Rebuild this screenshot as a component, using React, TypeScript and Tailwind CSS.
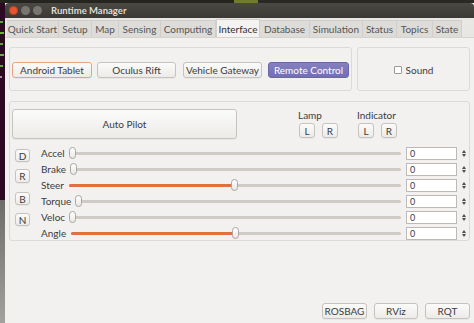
import React from "react";

const tabs: { name: string; w: number; active?: boolean }[] = [
  { name: "Quick Start", w: 52 },
  { name: "Setup", w: 33 },
  { name: "Map", w: 27 },
  { name: "Sensing", w: 42 },
  { name: "Computing", w: 55 },
  { name: "Interface", w: 44, active: true },
  { name: "Database", w: 50 },
  { name: "Simulation", w: 53 },
  { name: "Status", w: 34 },
  { name: "Topics", w: 36 },
  { name: "State", w: 29 },
];

function Btn({
  children,
  className = "",
}: {
  children: React.ReactNode;
  className?: string;
}) {
  return (
    <div
      className={
        "flex items-center justify-center whitespace-nowrap rounded-[3px] border border-[#c6c3be] bg-linear-to-b from-[#fbfbfa] to-[#ecebe8] text-[10px] leading-none text-[#3c3c3c] shadow-[0_1px_0_rgba(0,0,0,0.04)] " +
        className
      }
    >
      {children}
    </div>
  );
}

function Slider({ label, pct }: { label: string; pct: number }) {
  return (
    <div className="flex h-[16px] items-center">
      <div className="whitespace-nowrap text-[10px] leading-none text-[#3c3c3c]">{label}</div>
      <div className="relative ml-[4px] h-[12px] flex-1">
        <div className="absolute left-[1px] right-0 top-[5px] h-[3px] rounded-full bg-[#cfccc7]" />
        {pct > 0 && (
          <div
            className="absolute left-[1px] top-[5px] h-[3px] rounded-full bg-[#e36f3e]"
            style={{ width: `${pct}%` }}
          />
        )}
        <div
          className="absolute top-0 h-[12px] w-[7px] rounded-[4px] border border-[#a9a6a0] bg-linear-to-b from-[#ffffff] to-[#e9e8e5]"
          style={{ left: `calc(${pct}% * 0.98)` }}
        />
      </div>
      <div className="ml-[5px] flex h-[13px] w-[51px] items-center border border-[#bdbab5] bg-white pl-[3px] text-[9px] leading-none text-[#3c3c3c]">
        0
      </div>
      <div className="ml-[3px] flex w-[7px] flex-col items-center gap-[1px]">
        <svg width="4" height="3" viewBox="0 0 4 3">
          <path d="M2 0 L4 3 L0 3 Z" fill="#4a4a4a" />
        </svg>
        <svg width="4" height="3" viewBox="0 0 4 3">
          <path d="M0 0 L4 0 L2 3 Z" fill="#4a4a4a" />
        </svg>
      </div>
    </div>
  );
}

export default function App() {
  return (
    <div className="flex h-[323px] w-[474px] flex-col overflow-hidden bg-[#2b2a26] font-['Lato',sans-serif]">
      {/* desktop top strip */}
      <div className="flex h-[3px] shrink-0">
        <div className="w-[234px] bg-[#26241f]" />
        <div className="w-[24px] bg-[#6f7d2c]" />
        <div className="flex-1 bg-[#2a2925]" />
      </div>
      <div className="flex flex-1">
        {/* desktop left strip */}
        <div className="flex w-[5px] flex-col">
          <div className="flex h-[197px] flex-col gap-[9px] bg-[#2c0a21] pt-[18px]">
            <div className="h-[2px] w-[3px] bg-[#5fa33a]" />
            <div className="h-[2px] w-[4px] bg-[#6bb03f]" />
            <div className="h-[2px] w-[3px] bg-[#5fa33a]" />
            <div className="h-[2px] w-[4px] bg-[#6bb03f]" />
            <div className="h-[2px] w-[3px] bg-[#5fa33a]" />
            <div className="h-[2px] w-[2px] bg-[#a98aa0]" />
          </div>
          <div className="flex-1 bg-linear-to-b from-[#6e6c69] to-[#a3a29f]" />
        </div>
        {/* window */}
        <div className="flex flex-1 flex-col bg-[#f2f1f0]">
          {/* title bar */}
          <div className="flex h-[15px] items-center rounded-t-[4px] bg-linear-to-b from-[#4a4944] to-[#3a3935] pl-[4px]">
            <div className="flex items-center gap-[3px]">
              <div className="h-[9px] w-[9px] rounded-full bg-[#e6542f] shadow-[inset_0_0_0_1px_rgba(0,0,0,0.2)]" />
              <div className="h-[9px] w-[9px] rounded-full bg-[#78766f]" />
              <div className="h-[9px] w-[9px] rounded-full bg-[#78766f]" />
            </div>
            <div className="ml-[9px] whitespace-nowrap text-[9.5px] font-bold leading-none text-[#dfdbd2]">
              Runtime Manager
            </div>
          </div>
          {/* tab bar */}
          <div className="flex h-[19px] items-end bg-[#e9e7e4] pl-[2px]">
            {tabs.map((t) => (
              <div
                key={t.name}
                style={{ width: t.w }}
                className={
                  "flex items-center justify-center whitespace-nowrap border border-b-0 text-[10px] leading-none " +
                  (t.active
                    ? "h-[18px] border-[#d2cfca] bg-[#f4f3f2] text-[#2f2f2f]"
                    : "h-[17px] border-[#d2cfca] border-l-0 bg-[#dedcd8] text-[#555]")
                }
              >
                {t.name}
              </div>
            ))}
          </div>
          {/* content */}
          <div className="flex flex-1 flex-col border-t border-[#d6d3ce] px-[4px] pt-[9px]">
            {/* top group row */}
            <div className="flex h-[44px] gap-[5px]">
              <div className="flex w-[343px] items-center gap-[5px] rounded-[3px] border border-[#dcdad6] pl-[2px] pt-[2px]">
                <Btn className="h-[16px] w-[80px] border-[#e5a384]">Android Tablet</Btn>
                <Btn className="h-[16px] w-[79px]">Oculus Rift</Btn>
                <Btn className="ml-[2px] h-[16px] w-[79px]">Vehicle Gateway</Btn>
                <div className="ml-[1px] flex h-[16px] w-[81px] items-center justify-center whitespace-nowrap rounded-[3px] border border-[#6b66a6] bg-linear-to-b from-[#8580c0] to-[#746fb2] text-[10px] leading-none text-white">
                  Remote Control
                </div>
              </div>
              <div className="flex flex-1 items-center justify-center gap-[4px] rounded-[3px] border border-[#dcdad6] pt-[2px]">
                <div className="h-[8px] w-[8px] rounded-[1px] border border-[#9c9993] bg-white" />
                <div className="text-[10px] leading-none text-[#3c3c3c]">Sound</div>
              </div>
            </div>
            {/* main group */}
            <div className="mt-[10px] flex h-[140px] flex-col rounded-[3px] border border-[#dcdad6] pl-[2px] pr-[2px] pt-[7px]">
              <div className="flex h-[30px]">
                <Btn className="h-[30px] w-[225px] text-[10px]">Auto Pilot</Btn>
                <div className="ml-[61px] flex flex-col">
                  <div className="h-[14px] pt-[1px] text-[10px] leading-[10px] text-[#3c3c3c]">Lamp</div>
                  <div className="flex gap-[7px] pl-[1px]">
                    <Btn className="h-[15px] w-[16px] text-[9px]">L</Btn>
                    <Btn className="h-[15px] w-[16px] text-[9px]">R</Btn>
                  </div>
                </div>
                <div className="ml-[19px] flex flex-col">
                  <div className="h-[14px] pt-[1px] text-[10px] leading-[10px] text-[#3c3c3c]">Indicator</div>
                  <div className="flex gap-[7px] pl-[1px]">
                    <Btn className="h-[15px] w-[16px] text-[9px]">L</Btn>
                    <Btn className="h-[15px] w-[16px] text-[9px]">R</Btn>
                  </div>
                </div>
              </div>
              <div className="mt-[6px] flex">
                <div className="ml-[3px] flex w-[15px] flex-col pt-[4px]">
                  <Btn className="h-[13px] w-[15px] text-[9px]">D</Btn>
                  <Btn className="mt-[7px] h-[14px] w-[15px] text-[9px]">R</Btn>
                  <Btn className="mt-[9px] h-[13px] w-[15px] text-[9px]">B</Btn>
                  <Btn className="mt-[8px] h-[13px] w-[15px] text-[9px]">N</Btn>
                </div>
                <div className="ml-[11px] flex flex-1 flex-col">
                  <Slider label="Accel" pct={0} />
                  <Slider label="Brake" pct={0} />
                  <Slider label="Steer" pct={50} />
                  <Slider label="Torque" pct={0} />
                  <Slider label="Veloc" pct={0} />
                  <Slider label="Angle" pct={50} />
                </div>
              </div>
            </div>
            {/* bottom buttons */}
            <div className="mb-[4px] mt-auto flex justify-end gap-[7px]">
              <Btn className="h-[16px] w-[45px]">ROSBAG</Btn>
              <Btn className="h-[16px] w-[44px]">RViz</Btn>
              <Btn className="h-[16px] w-[45px]">RQT</Btn>
            </div>
          </div>
        </div>
      </div>
    </div>
  );
}
